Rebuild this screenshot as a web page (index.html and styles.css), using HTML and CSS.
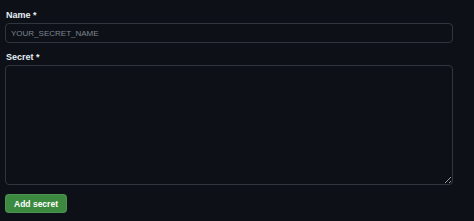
FILE: index.html
```html
<!DOCTYPE html>
<html lang="en">
<head>
    <meta charset="UTF-8">
    <meta name="viewport" content="width=device-width, initial-scale=1.0">
    <title>New secret</title>
    <link rel="stylesheet" href="styles.css">
</head>
<body>
    <form class="secret-form">
        <label class="field-label" for="secret-name">Name *</label>
        <input type="text" id="secret-name" class="text-input" placeholder="YOUR_SECRET_NAME">

        <label class="field-label second" for="secret-value">Secret *</label>
        <textarea id="secret-value" class="secret-area"></textarea>

        <button type="button" class="add-button">Add secret</button>
    </form>
</body>
</html>
```

FILE: styles.css
```css
body {
    background-color: #0d1117;
    color: #e6edf3;
    font-family: "Liberation Sans", Arial, sans-serif;
    margin: 0;
    padding: 0;
}

.secret-form {
    display: flex;
    flex-direction: column;
    align-items: flex-start;
    width: 448px;
    padding: 9px 0 0 5px;
}

.field-label {
    display: block;
    font-size: 9px;
    font-weight: bold;
    line-height: 12px;
    margin-bottom: 2px;
    padding-left: 1px;
}

.field-label.second {
    margin-top: 8px;
}

.text-input {
    width: 100%;
    height: 20px;
    box-sizing: border-box;
    padding: 0 5px;
    background-color: #0d1117;
    border: 1px solid #30363d;
    border-radius: 4px;
    color: #e6edf3;
    font-family: inherit;
    font-size: 8px;
    outline: none;
}

.text-input::placeholder {
    color: #7d8590;
}

.secret-area {
    width: 100%;
    height: 120px;
    box-sizing: border-box;
    margin: 0;
    background-color: #0d1117;
    border: 1px solid #30363d;
    border-radius: 4px;
    color: #e6edf3;
    outline: none;
}

.add-button {
    margin-top: 9px;
    width: 62px;
    height: 19px;
    padding: 0;
    background-color: #3c8a40;
    border: 1px solid rgba(240, 246, 252, 0.1);
    border-radius: 4px;
    color: white;
    font-family: inherit;
    font-size: 8.5px;
    font-weight: bold;
    cursor: pointer;
}
```
